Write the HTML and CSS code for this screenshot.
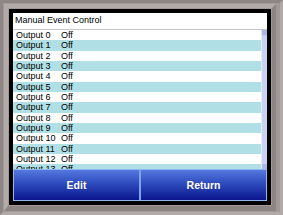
FILE: index.html
```html
<!DOCTYPE html>
<html>
<head>
<meta charset="utf-8">
<link rel="stylesheet" href="styles.css">
</head>
<body>
<div class="bezel">
  <div class="bevel">
    <div class="screen">
      <div class="title">Manual Event Control</div>
      <div class="listwrap">
        <div class="list">
          <div class="row"><span class="name">Output 0</span><span>Off</span></div>
          <div class="row alt"><span class="name">Output 1</span><span>Off</span></div>
          <div class="row"><span class="name">Output 2</span><span>Off</span></div>
          <div class="row alt"><span class="name">Output 3</span><span>Off</span></div>
          <div class="row"><span class="name">Output 4</span><span>Off</span></div>
          <div class="row alt"><span class="name">Output 5</span><span>Off</span></div>
          <div class="row"><span class="name">Output 6</span><span>Off</span></div>
          <div class="row alt"><span class="name">Output 7</span><span>Off</span></div>
          <div class="row"><span class="name">Output 8</span><span>Off</span></div>
          <div class="row alt"><span class="name">Output 9</span><span>Off</span></div>
          <div class="row"><span class="name">Output 10</span><span>Off</span></div>
          <div class="row alt"><span class="name">Output 11</span><span>Off</span></div>
          <div class="row"><span class="name">Output 12</span><span>Off</span></div>
          <div class="row alt"><span class="name">Output 13</span><span>Off</span></div>
        </div>
        <div class="scrollbar">
          <div class="arrow up"></div>
          <div class="track"></div>
          <div class="arrow down"></div>
        </div>
      </div>
      <div class="buttons">
        <div class="btn">Edit</div>
        <div class="btn">Return</div>
      </div>
    </div>
  </div>
</div>
</body>
</html>
```
FILE: styles.css
```css
html, body {
  margin: 0;
  padding: 0;
  background: #a09896;
}
.bezel {
  width: 283px;
  height: 215px;
  box-sizing: border-box;
  border-style: solid;
  border-width: 3px;
  border-color: #8e8684 #b2aaa8 #b2aaa8 #8e8684;
  background: #a19997;
  padding: 1px 0 0 1px;
}
.bevel {
  width: 272px;
  height: 207px;
  box-sizing: border-box;
  border-style: solid;
  border-width: 4px 4px 5px 4px;
  border-color: #b3abaa #8c8482 #8c8482 #b3abaa;
  background: #a19997;
  padding: 1px;
}
.screen {
  width: 100%;
  height: 100%;
  box-sizing: border-box;
  border: 4px solid #000;
  background: #fff;
  display: flex;
  flex-direction: column;
  font-family: "Liberation Sans", Arial, sans-serif;
  font-size: 9px;
  color: #000;
}
.title {
  height: 17px;
  line-height: 15px;
  padding-left: 2px;
  border-bottom: 1px solid #c8c8c8;
  box-sizing: border-box;
  flex: none;
}
.listwrap {
  flex: 1;
  display: flex;
  overflow: hidden;
}
.list {
  flex: 1;
  overflow: hidden;
}
.row {
  height: 10.35px;
  line-height: 10.35px;
  display: flex;
  padding-left: 3px;
}
.row.alt {
  background: #b0e0e6;
}
.name {
  width: 45px;
}
.scrollbar {
  width: 5px;
  display: flex;
  flex-direction: column;
  background: #c9d2f2;
  border-left: 1px solid #e6eaf8;
}
.arrow {
  height: 5px;
  background: #aab6e6;
}
.track {
  flex: 1;
}
.buttons {
  height: 32px;
  flex: none;
  display: flex;
  border: 1px solid #8fb8f0;
  box-sizing: border-box;
}
.btn {
  flex: 1;
  background: linear-gradient(#5578e0, #2a46b8 50%, #0a168e);
  color: #fff;
  font-weight: bold;
  font-size: 10.5px;
  display: flex;
  align-items: center;
  justify-content: center;
}
.btn + .btn {
  border-left: 2px solid #7aa4e4;
}
```
